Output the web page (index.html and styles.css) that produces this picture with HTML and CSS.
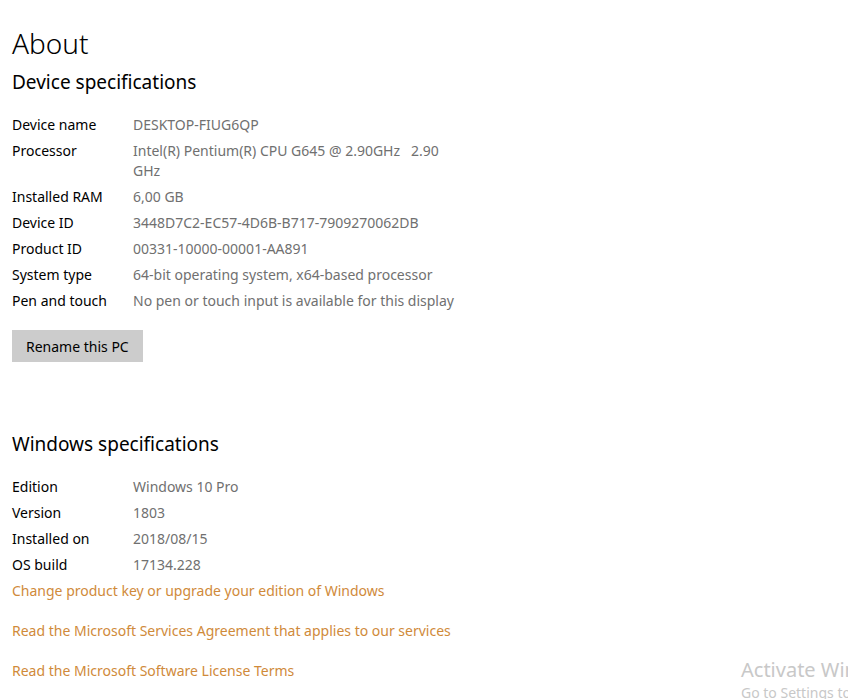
FILE: index.html
```html
<!DOCTYPE html>
<html lang="en">
<head>
    <meta charset="UTF-8">
    <title>About</title>
    <link rel="stylesheet" href="styles.css">
</head>
<body>
    <div class="page">
        <h1>About</h1>

        <!-- Device -->
        <h2>Device specifications</h2>
        <div class="specs">
            <div class="label">Device name</div>
            <div class="value">DESKTOP-FIUG6QP</div>
            <div class="label">Processor</div>
            <div class="value">Intel(R) Pentium(R) CPU G645 @ 2.90GHz &nbsp; 2.90 GHz</div>
            <div class="label">Installed RAM</div>
            <div class="value">6,00 GB</div>
            <div class="label">Device ID</div>
            <div class="value">3448D7C2-EC57-4D6B-B717-7909270062DB</div>
            <div class="label">Product ID</div>
            <div class="value">00331-10000-00001-AA891</div>
            <div class="label">System type</div>
            <div class="value">64-bit operating system, x64-based processor</div>
            <div class="label">Pen and touch</div>
            <div class="value">No pen or touch input is available for this display</div>
        </div>
        <button class="rename">Rename this PC</button>

        <!-- Windows -->
        <h2 class="win-title">Windows specifications</h2>
        <div class="specs">
            <div class="label">Edition</div>
            <div class="value">Windows 10 Pro</div>
            <div class="label">Version</div>
            <div class="value">1803</div>
            <div class="label">Installed on</div>
            <div class="value">2018/08/15</div>
            <div class="label">OS build</div>
            <div class="value">17134.228</div>
        </div>
        <div class="links">
            <a href="#">Change product key or upgrade your edition of Windows</a>
            <a href="#">Read the Microsoft Services Agreement that applies to our services</a>
            <a href="#">Read the Microsoft Software License Terms</a>
        </div>
    </div>

    <div class="watermark">
        <div class="wm-title">Activate Windows</div>
        <div class="wm-sub">Go to Settings to activate Windows.</div>
    </div>
</body>
</html>
```

FILE: styles.css
```css
html, body {
    height: 100%;
}
body {
    margin: 0;
    font-family: "Noto Sans", "Open Sans", sans-serif;
    font-size: 14px;
    color: #000;
    background: #fff;
    overflow: hidden;
    position: relative;
}
.page {
    padding: 23px 12px 0;
}
h1 {
    margin: 0;
    font-size: 28px;
    font-weight: 300;
    line-height: 40px;
}
h2 {
    margin: 5px 0 19px;
    font-size: 19px;
    font-weight: 400;
    line-height: 28px;
}
.win-title {
    margin-top: 68px;
}
.specs {
    display: grid;
    grid-template-columns: 121px 325px;
    row-gap: 6px;
    line-height: 20px;
}
.value {
    color: #707070;
}
.rename {
    margin-top: 19px;
    height: 32px;
    padding: 0 14px;
    border: none;
    background: #cccccc;
    font-family: inherit;
    font-size: 14px;
    color: #000;
}
.links {
    display: flex;
    flex-direction: column;
    gap: 20px;
    margin-top: 6px;
    line-height: 20px;
}
.links a {
    color: #d08a3a;
    text-decoration: none;
    align-self: flex-start;
}
.watermark {
    position: absolute;
    left: 741px;
    top: 656px;
    white-space: nowrap;
    color: #c8c8c8;
}
.wm-title {
    font-size: 20px;
    line-height: 28px;
}
.wm-sub {
    font-size: 14px;
    line-height: 18px;
}
```
